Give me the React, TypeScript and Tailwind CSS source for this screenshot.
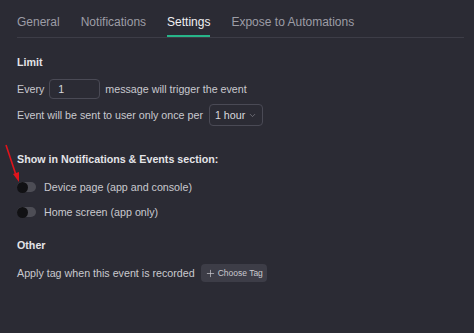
import { Plus, ChevronDown } from "lucide-react";

const tabs = ["General", "Notifications", "Settings", "Expose to Automations"];

function Toggle() {
  return (
    <div className="flex h-[10px] w-[19px] items-center rounded-full bg-[#4d4d55]">
      <div className="h-[11px] w-[11px] rounded-full bg-[#111114]" />
    </div>
  );
}

export default function App() {
  return (
    <div
      className="relative h-[333px] w-[474px] bg-[#2b2b34] px-[17px] text-[#c9c9cf]"
      style={{ fontFamily: "'Liberation Sans', Arial, sans-serif" }}
    >
      <div className="-mr-[7px] flex gap-[21px] border-b border-[#3d3d47] pt-[13px] text-[12px]">
        {tabs.map((tab) => (
          <div
            key={tab}
            className={
              tab === "Settings"
                ? "border-b-2 border-[#27b589] pb-[4px] text-[#f0f0f2]"
                : "pb-[6px] text-[#9d9da6]"
            }
          >
            {tab}
          </div>
        ))}
      </div>

      <div className="pt-[16px] text-[10.7px]">
        <h3 className="font-bold text-[#e4e4e8]">Limit</h3>

        <div className="mt-[9px] flex items-center gap-[5px]">
          <span>Every</span>
          <div className="flex h-[20px] w-[51px] items-center rounded-[4px] border border-[#4a4a55] px-[8px] text-[#d8d8dc]">
            1
          </div>
          <span>message will trigger the event</span>
        </div>

        <div className="mt-[5px] flex items-center gap-[6px]">
          <span>Event will be sent to user only once per</span>
          <div className="flex h-[22px] items-center gap-[3px] rounded-[4px] border border-[#4a4a55] px-[5px] text-[#d8d8dc]">
            1 hour
            <ChevronDown size={9} className="text-[#7d7d86]" />
          </div>
        </div>

        <h3 className="mt-[25px] font-bold text-[#e4e4e8]">
          Show in Notifications &amp; Events section:
        </h3>

        <div className="mt-[12px] flex items-center gap-[8px]">
          <Toggle />
          <span>Device page (app and console)</span>
        </div>

        <div className="mt-[9px] flex items-center gap-[8px]">
          <Toggle />
          <span>Home screen (app only)</span>
        </div>

        <h3 className="mt-[17px] font-bold text-[#e4e4e8]">Other</h3>

        <div className="mt-[11px] flex items-center gap-[6px]">
          <span>Apply tag when this event is recorded</span>
          <div className="flex h-[18px] items-center gap-[2px] rounded-[4px] bg-[#3d3d47] px-[4px] text-[8.5px] text-[#c9c9cf]">
            <Plus size={11} strokeWidth={1.5} />
            Choose Tag
          </div>
        </div>
      </div>

      <svg
        className="absolute left-0 top-[140px]"
        width="30"
        height="50"
        viewBox="0 0 30 50"
      >
        <line x1="6" y1="5" x2="16" y2="35" stroke="#e0141c" strokeWidth="1.6" />
        <polygon points="19,42 13,34 19,32" fill="#e0141c" />
      </svg>
    </div>
  );
}
